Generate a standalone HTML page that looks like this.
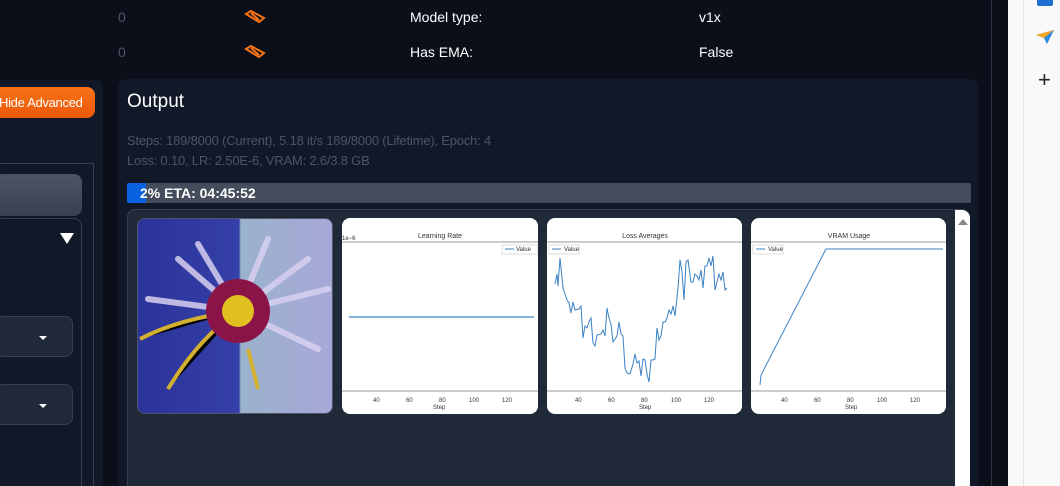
<!DOCTYPE html>
<html><head><meta charset="utf-8"><style>
*{margin:0;padding:0;box-sizing:border-box}
html,body{width:1060px;height:486px;overflow:hidden}
body{background:#0b0f19;font-family:"Liberation Sans",sans-serif;position:relative;color:#fff}
.a{position:absolute}
.t{font-size:14px}
</style></head><body>
<div class="a t" style="left:118px;top:9px;color:#4b5563">0</div>
<div class="a t" style="left:118px;top:44px;color:#4b5563">0</div>
<svg class="a" style="left:244px;top:10px" width="22" height="14"><path d="M2 4 L7 1 L20 8 L15 12 Z M7 3 L15 10" fill="none" stroke="#f97316" stroke-width="2"/></svg>
<svg class="a" style="left:244px;top:45px" width="22" height="14"><path d="M2 4 L7 1 L20 8 L15 12 Z M7 3 L15 10" fill="none" stroke="#f97316" stroke-width="2"/></svg>
<div class="a t" style="left:410px;top:9px">Model type:</div>
<div class="a t" style="left:410px;top:44px">Has EMA:</div>
<div class="a t" style="left:699px;top:9px">v1x</div>
<div class="a t" style="left:699px;top:44px">False</div>
<div class="a" style="left:991px;top:0;width:1px;height:486px;background:#2b3140"></div>
<div class="a" style="left:1008px;top:0;width:52px;height:486px;background:#f9f9f9"></div>
<div class="a" style="left:1023px;top:0;width:1px;height:486px;background:#e5e5e5"></div>
<div class="a" style="left:1037px;top:-4px;width:16px;height:10px;background:#1f6fd0;border-radius:2px"></div>
<svg class="a" style="left:1035px;top:29px" width="20" height="16"><path d="M1 6 L19 1 L12 15 L9 9 Z" fill="#2a8ae0"/><path d="M1 6 L19 1 L9 9Z" fill="#f5a623"/></svg>
<div class="a" style="left:1038px;top:67px;font-size:22px;color:#222;font-weight:300">+</div>

<div class="a" style="left:0;top:80px;width:103px;height:406px;background:#111827;border-radius:0 8px 0 0"></div>
<div class="a" style="left:-10px;top:87px;width:105px;height:31px;border-radius:8px;background:linear-gradient(#f97316,#ea580c);padding:8px 0 0 9px;white-space:nowrap;font-size:13px;letter-spacing:-0.3px">Hide Advanced</div>
<div class="a" style="left:-2px;top:163px;width:96px;height:340px;border:1px solid #374151"></div>
<div class="a" style="left:-5px;top:174px;width:87px;height:42px;border-radius:8px;background:linear-gradient(#4b5563,#374151)"></div>
<div class="a" style="left:-5px;top:218px;width:87px;height:290px;border-radius:8px;border:1px solid #374151"></div>
<div class="a" style="left:60px;top:233px;width:0;height:0;border-left:7px solid transparent;border-right:7px solid transparent;border-top:11px solid #fff"></div>
<div class="a" style="left:-5px;top:316px;width:78px;height:41px;border-radius:8px;background:#1f2937;border:1px solid #374151"></div>
<div class="a" style="left:-5px;top:384px;width:78px;height:41px;border-radius:8px;background:#1f2937;border:1px solid #374151"></div>
<div class="a" style="left:39px;top:336px;border-left:4px solid transparent;border-right:4px solid transparent;border-top:4px solid #fff"></div>
<div class="a" style="left:39px;top:404px;border-left:4px solid transparent;border-right:4px solid transparent;border-top:4px solid #fff"></div>

<div class="a" style="left:118px;top:79px;width:860px;height:420px;background:#111827;border-radius:8px"></div>
<div class="a" style="left:127px;top:91px;font-size:19px">Output</div>
<div class="a" style="left:127px;top:131px;color:#4b5563;line-height:20px;font-size:13px;letter-spacing:-0.2px">Steps: 189/8000 (Current), 5.18 it/s 189/8000 (Lifetime), Epoch: 4<br>Loss: 0.10, LR: 2.50E-6, VRAM: 2.6/3.8 GB</div>
<div class="a" style="left:127px;top:183px;width:844px;height:20px;background:#454d5c;border-radius:2px"></div>
<div class="a" style="left:127px;top:183px;width:19px;height:20px;background:#0b62e0;border-radius:2px 0 0 2px"></div>
<div class="a t" style="left:140px;top:185px;font-weight:bold">2% ETA: 04:45:52</div>
<div class="a" style="left:127px;top:209px;width:843px;height:290px;background:#1f2937;border:1px solid #374151;border-radius:8px"></div>
<div class="a" style="left:955px;top:210px;width:15px;height:280px;background:#fff;border-radius:0 8px 0 0"></div>
<div class="a" style="left:958px;top:219px;border-left:5px solid transparent;border-right:5px solid transparent;border-bottom:6px solid #888"></div>

<div class="a" style="left:137px;top:218px;width:196px;height:196px;border-radius:8px;overflow:hidden;border:1px solid #4b5563;background:linear-gradient(90deg,#2a3399 0,#3540a8 52%,#9ab2cc 53%,#a8a8d8 100%)">
<svg width="196" height="196"><g stroke="#d8d0f0" stroke-width="6" opacity=".85" stroke-linecap="round"><path d="M100 92 L40 40"/><path d="M100 92 L10 80"/><path d="M100 92 L60 25"/><path d="M100 92 L170 40"/><path d="M100 92 L190 70"/><path d="M100 92 L180 130"/><path d="M100 92 L130 20"/></g><g stroke="#d4b030" stroke-width="4"><path d="M100 92 Q40 100 2 120"/><path d="M100 92 Q60 120 30 170"/><path d="M110 130 L120 170"/></g><circle cx="100" cy="92" r="32" fill="#8a1448"/><circle cx="100" cy="92" r="16" fill="#e0c020"/></svg></div>

<div class="a" style="left:342px;top:218px;width:196px;height:196px;background:#fff;border-radius:8px;overflow:hidden">
<svg width="196" height="196" font-family="Liberation Sans" font-size="6" fill="#333"><text x="98" y="20" text-anchor="middle" font-size="7">Learning Rate</text><text x="0" y="22">1e−6</text><line x1="0" y1="24" x2="196" y2="24" stroke="#999"/><line x1="0" y1="173" x2="196" y2="173" stroke="#999"/><rect x="160" y="27" width="36" height="9" fill="#fff" stroke="#ddd"/><line x1="163" y1="31" x2="172" y2="31" stroke="#3b82c4"/><text x="174" y="33">Value</text><line x1="7" y1="99" x2="192" y2="99" stroke="#3b82c4" stroke-width="1.2"/><text x="31" y="184">40</text><text x="64" y="184">60</text><text x="97" y="184">80</text><text x="127" y="184">100</text><text x="160" y="184">120</text><text x="91" y="191">Step</text></svg></div>

<div class="a" style="left:547px;top:218px;width:195px;height:196px;background:#fff;border-radius:8px;overflow:hidden">
<svg width="195" height="196" font-family="Liberation Sans" font-size="6" fill="#333"><text x="98" y="20" text-anchor="middle" font-size="7">Loss Averages</text><line x1="0" y1="24" x2="195" y2="24" stroke="#999"/><line x1="0" y1="173" x2="195" y2="173" stroke="#999"/><rect x="2" y="27" width="30" height="9" fill="#fff" stroke="#ddd"/><line x1="5" y1="31" x2="14" y2="31" stroke="#3b82c4"/><text x="17" y="33">Value</text><polyline fill="none" stroke="#3b82c4" stroke-width="1" points="8,66 10,56 11,68 13,40 16,70 20,82 22,85 24,95 26,84 28,92 32,91 34,88 36,120 38,108 40,110 42,104 44,100 46,125 48,128 50,117 54,116 56,112 58,118 60,90 62,100 64,106 66,124 70,118 72,104 74,116 76,118 78,150 80,155 83,156 86,146 88,136 90,145 92,143 94,158 96,141 98,142 100,156 102,164 104,142 106,142 108,141 110,110 112,122 114,118 116,104 118,104 120,100 122,92 124,96 126,88 128,98 131,70 133,42 135,54 137,82 139,44 141,42 144,64 146,64 148,56 150,58 152,62 154,52 156,70 158,48 160,48 162,40 164,48 166,38 168,72 172,56 174,62 176,54 178,72 180,70"/><text x="28" y="184">40</text><text x="61" y="184">60</text><text x="94" y="184">80</text><text x="124" y="184">100</text><text x="157" y="184">120</text><text x="92" y="191">Step</text></svg></div>

<div class="a" style="left:751px;top:218px;width:195px;height:196px;background:#fff;border-radius:8px;overflow:hidden">
<svg width="195" height="196" font-family="Liberation Sans" font-size="6" fill="#333"><text x="98" y="20" text-anchor="middle" font-size="7">VRAM Usage</text><line x1="0" y1="24" x2="195" y2="24" stroke="#999"/><line x1="0" y1="173" x2="195" y2="173" stroke="#999"/><rect x="2" y="27" width="30" height="9" fill="#fff" stroke="#ddd"/><line x1="5" y1="31" x2="14" y2="31" stroke="#3b82c4"/><text x="17" y="33">Value</text><polyline fill="none" stroke="#3b82c4" stroke-width="1" points="9,167 10,157 75,31 192,31"/><text x="30" y="184">40</text><text x="63" y="184">60</text><text x="96" y="184">80</text><text x="126" y="184">100</text><text x="159" y="184">120</text><text x="94" y="191">Step</text></svg></div>
</body></html>
